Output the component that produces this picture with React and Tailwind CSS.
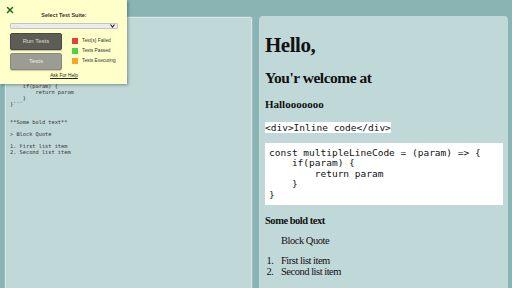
import { X } from "lucide-react";

const markdown = `# Hello,

## You'r welcome at

#### Hallooooooo

\`<div>Inline code</div>\`

\`\`\`
const multipleLineCode = (param) => {
    if(param) {
        return param
    }
}\`\`\`


**Some bold text**

> Block Quote

1. First list item
2. Second list item`;

const codeBlock = `const multipleLineCode = (param) => {
    if(param) {
        return param
    }
}`;

const legend = [
  { color: "bg-[#ee3b3b]", label: "Test(s) Failed" },
  { color: "bg-[#4fd04f]", label: "Tests Passed" },
  { color: "bg-[#f5a623]", label: "Tests Executing" },
];

const TestPanel = () => (
  <div className="absolute left-0 top-0 flex h-[84px] w-[127px] flex-col bg-[#ffffca] pl-[10px] pr-[9px] pt-[12px] shadow-[1px_1px_3px_rgba(0,0,0,0.35)] font-['Liberation_Sans',Arial,sans-serif]">
    {/* close button */}
    <button className="absolute left-[5px] top-[5px] text-[#1f6a1f]">
      <X size={10} strokeWidth={3.5} />
    </button>

    <div className="text-center text-[5.5px] font-bold leading-[6px] text-[#333]">
      Select Test Suite:
    </div>

    <div className="mt-[5px] flex h-[6px] items-center justify-between rounded-[1px] border border-[#c4c4c4] bg-[#ececec] px-[2px]">
      <span className="text-[4px] leading-[4px] text-[#777]">- - -</span>
      <svg width="5" height="4" viewBox="0 0 10 8">
        <path d="M1 1 L5 6 L9 1" fill="none" stroke="#222" strokeWidth="2.2" />
      </svg>
    </div>

    <div className="mt-[4px] flex">
      <div className="flex w-[52px] flex-col gap-[3px]">
        <button className="flex h-[17px] items-center justify-center rounded-[2px] border border-[#4a4a43] bg-[#5d5d55] text-[6px] text-[#dcdcd4] shadow-[0_1px_1px_rgba(0,0,0,0.25)]">
          Run Tests
        </button>
        <button className="flex h-[17px] items-center justify-center rounded-[2px] border border-[#8a8a83] bg-[#9c9c94] text-[6px] text-[#ececE6] shadow-[0_1px_1px_rgba(0,0,0,0.2)]">
          Tests
        </button>
      </div>
      <div className="ml-[10px] flex flex-col gap-[4px] pt-[4.5px]">
        {legend.map((item) => (
          <div key={item.label} className="flex h-[6px] items-center">
            <span className={`h-[6px] w-[6px] ${item.color}`} />
            <span className="ml-[4px] text-[4.8px] leading-[6px] text-[#333]">{item.label}</span>
          </div>
        ))}
      </div>
    </div>

    <a className="mt-[3px] self-center text-[4.8px] leading-[5px] text-[#222] underline">
      Ask For Help
    </a>
  </div>
);

export default function App() {
  return (
    <div className="relative flex h-[288px] w-[512px] gap-[6px] overflow-hidden bg-[#88b4b4] px-[4px] pt-[16px]">
      {/* editor */}
      <div className="h-[290px] w-[249px] rounded-t-[3px] border border-[#9dbebe] bg-[#c1d8d8] shadow-[inset_1px_1px_0_#d6e6e6,inset_-1px_0_0_#d6e6e6] px-[5px] pt-[6px]">
        <pre className="whitespace-pre font-['DejaVu_Sans_Mono',monospace] text-[5.3px] leading-[6px] text-[#333]">
          {markdown}
        </pre>
      </div>

      {/* preview */}
      <div className="flex h-[290px] w-[249px] flex-col rounded-t-[4px] bg-[#c1d8d9] pl-[6px] pr-[5px] font-['Liberation_Serif','Times_New_Roman',serif] tracking-[-0.03em] text-[#111]">
        <h1 className="mt-[17px] text-[21px] font-bold leading-[25px]">Hello,</h1>
        <h2 className="mt-[10px] text-[15.5px] font-bold leading-[19px]">You'r welcome at</h2>
        <h4 className="mt-[11px] text-[11px] font-bold leading-[13px] tracking-normal">Hallooooooo</h4>
        <p className="mt-[10px] text-[11px] leading-[13px] tracking-normal">
          <code className="bg-white font-['DejaVu_Sans_Mono',monospace] text-[9.5px]">{"<div>Inline code</div>"}</code>
        </p>
        <pre className="mt-[9px] bg-white py-[5px] pl-[4px] font-['DejaVu_Sans_Mono',monospace] text-[9.5px] leading-[10.4px] tracking-normal">
          {codeBlock}
        </pre>
        <p className="mt-[8.5px] text-[10.5px] font-bold leading-[13px]">Some bold text</p>
        <blockquote className="mt-[7px] pl-[16px] text-[10.5px] leading-[13px]">Block Quote</blockquote>
        <ol className="mt-[8.5px] text-[10.5px] leading-[11px]">
          <li className="flex"><span className="ml-[1.5px] w-[14.5px]">1.</span>First list item</li>
          <li className="flex"><span className="ml-[1.5px] w-[14.5px]">2.</span>Second list item</li>
        </ol>
      </div>

      <TestPanel />
    </div>
  );
}
